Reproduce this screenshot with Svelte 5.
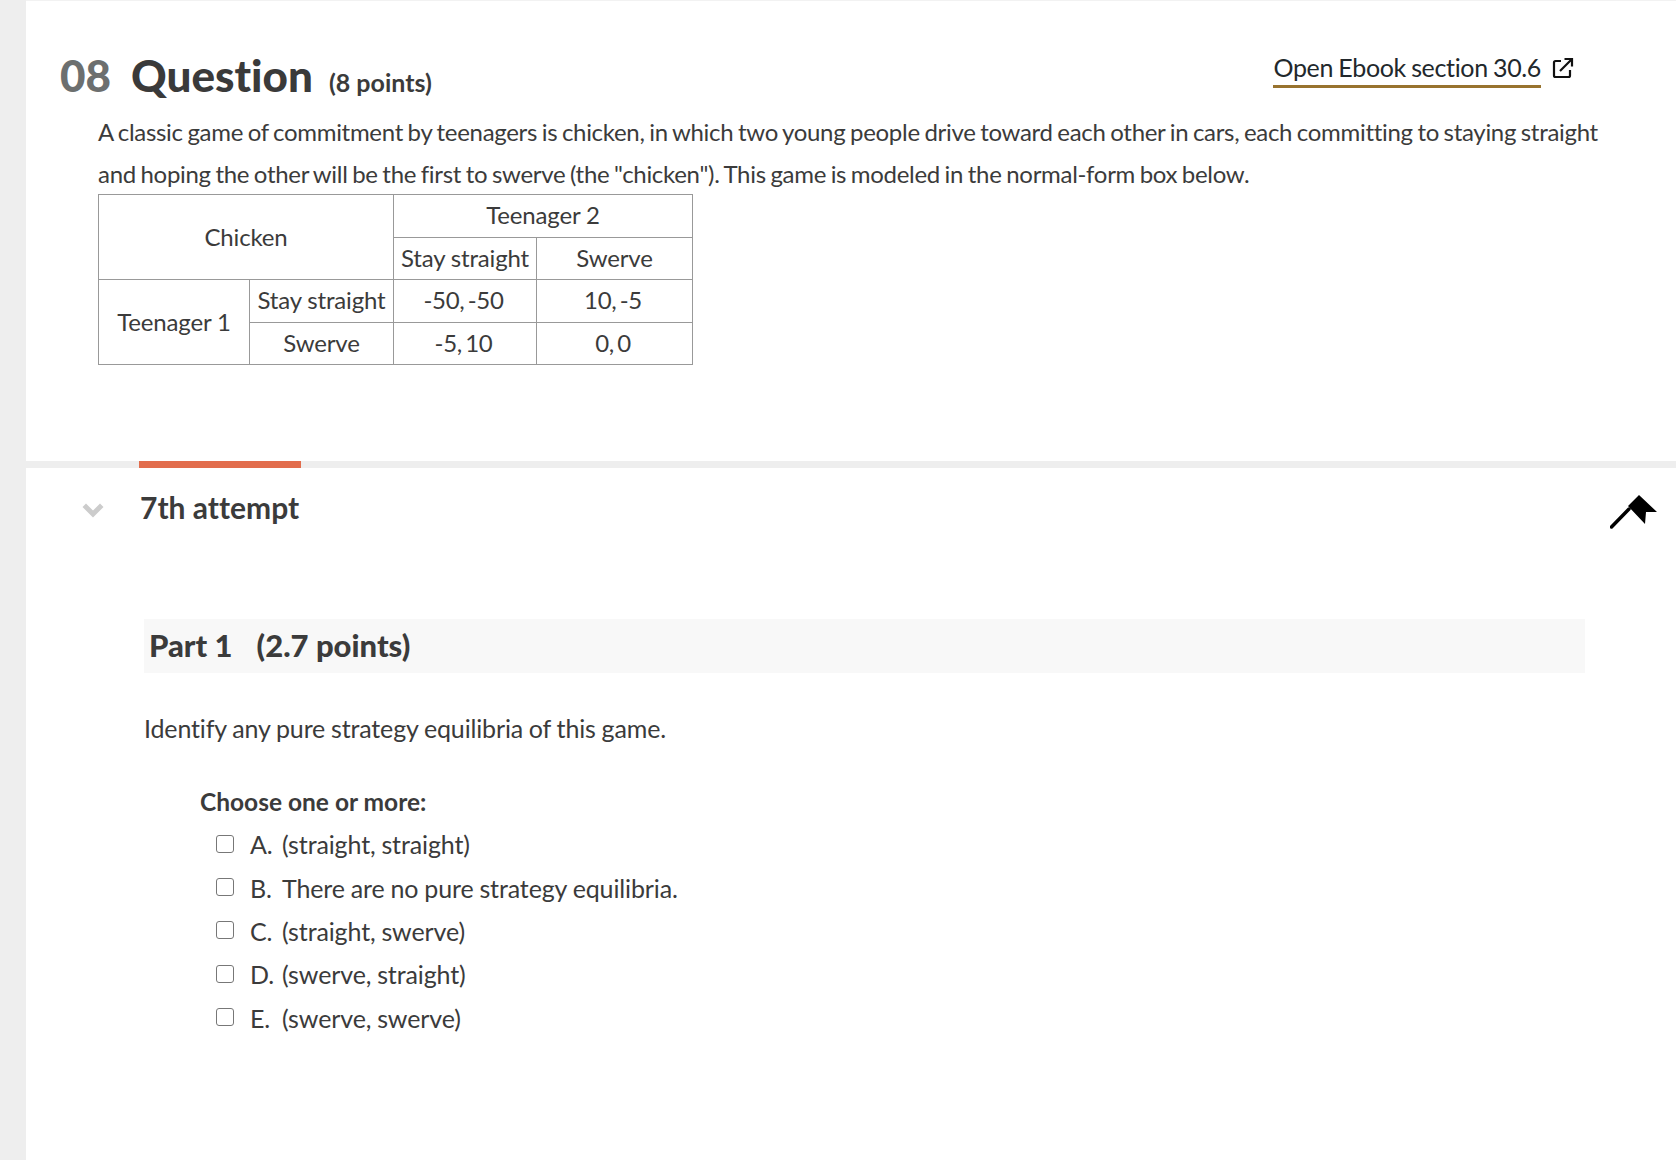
<script>
  const options = [
    ["A.", "(straight, straight)"],
    ["B.", "There are no pure strategy equilibria."],
    ["C.", "(straight, swerve)"],
    ["D.", "(swerve, straight)"],
    ["E.", "(swerve, swerve)"]
  ];
</script>

<main class="page">
  <section class="question">
    <header class="head">
      <h1><span class="num">08</span><span class="title">Question</span><span class="pts">(8 points)</span></h1>
      <a class="ebook" href="#ebook"><span class="link">Open Ebook section 30.6</span>
        <svg width="22" height="22" viewBox="0 0 22 22" fill="none" stroke="#111" stroke-width="2.2">
          <path d="M9 4H3.5A1.5 1.5 0 0 0 2 5.500V18.500A1.500 1.500 0 0 0 3.500 20H16.500A1.500 1.500 0 0 0 18 18.500V13" />
          <path d="M8 14L20 2M12.500 2H20V9.500" />
        </svg>
      </a>
    </header>
    <div class="stem">
      <p>A classic game of commitment by teenagers is chicken, in which two young people drive toward each other in cars, each committing to staying straight and hoping the other will be the first to swerve (the "chicken"). This game is modeled in the normal-form box below.</p>
      <table>
        <colgroup><col class="c1" /><col class="c2" /><col class="c3" /><col class="c4" /></colgroup>
        <tbody>
          <tr><td colspan="2" rowspan="2">Chicken</td><td colspan="2">Teenager 2</td></tr>
          <tr><td>Stay straight</td><td>Swerve</td></tr>
          <tr><td rowspan="2">Teenager 1</td><td>Stay straight</td><td class="pay">-50, -50</td><td class="pay">10, -5</td></tr>
          <tr><td>Swerve</td><td class="pay">-5, 10</td><td class="pay">0, 0</td></tr>
        </tbody>
      </table>
    </div>
  </section>

  <div class="tabs"><span class="tab"></span></div>

  <section class="attempt">
    <div class="attempt-head">
      <svg class="chev" width="22" height="15" viewBox="0 0 22 15"><path d="M0.500 4L4 0.500L11 7.500L18 0.500L21.500 4L11 14.500Z" fill="#ccc" /></svg>
      <h2>7th attempt</h2>
      <svg class="pin" width="48" height="36" viewBox="0 0 48 36">
        <path d="M1.500 33L19 15" stroke="#000" stroke-width="3.500" stroke-linecap="round" />
        <path d="M18 12L29 1L47 18H36L35 30Z" fill="#000" />
      </svg>
    </div>
    <div class="part">
      <h3><span>Part 1</span><span>(2.7 points)</span></h3>
      <p class="ask">Identify any pure strategy equilibria of this game.</p>
      <div class="choices">
        <div class="choose">Choose one or more:</div>
        {#each options as [letter, text]}
          <label class="opt">
            <input type="checkbox" />
            <span class="letter">{letter}</span>
            <span>{text}</span>
          </label>
        {/each}
      </div>
    </div>
  </section>
</main>

<style>
  :global(body) {
    background: #fff;
    font-family: "Lato", sans-serif;
    font-variant-ligatures: none;
    color: #3b3b3b;
  }
  .page {
    box-sizing: border-box;
    min-height: 1160px;
    margin-left: 26px;
    background: #fff;
    border-top: 1px solid #f2f2f2;
    box-shadow: -26px 0 0 #eee;
  }
  .question {
    height: 460px;
    box-sizing: border-box;
    padding: 44px 0 0 34px;
  }
  .head {
    display: flex;
    justify-content: space-between;
    align-items: flex-start;
    padding-right: 102px;
  }
  h1 {
    margin: 0;
    display: flex;
    align-items: baseline;
    font-size: 44px;
    line-height: 60px;
    font-weight: 900;
  }
  .num {
    color: #6c6f6f;
    margin-right: 20px;
  }
  .title {
    color: #3a3a3a;
    margin-right: 16px;
  }
  .pts {
    font-size: 25px;
    font-weight: 700;
  }
  .ebook {
    display: flex;
    align-items: center;
    gap: 11px;
    margin-top: 4px;
    font-size: 25px;
    letter-spacing: -0.35px;
    word-spacing: -0.8px;
    color: #22282c;
    text-decoration: none;
  }
  .link {
    line-height: 36px;
    border-bottom: 3px solid #98732f;
  }
  .ebook svg {
    margin-bottom: 2px;
  }
  .stem {
    margin: -1px 0 0 38px;
    width: 1510px;
  }
  p {
    margin: 0;
    font-size: 24px;
    line-height: 41.500px;
    letter-spacing: -0.3px;
    word-spacing: -1.2px;
  }
  table {
    border-collapse: collapse;
    table-layout: fixed;
    width: 594px;
    font-size: 24px;
    letter-spacing: -0.17px;
  }
  .c1 { width: 151px; }
  .c2 { width: 144px; }
  .c3 { width: 143px; }
  .c4 { width: 156px; }
  td {
    border: 1px solid #999;
    height: 42.500px;
    padding: 0 0 2px;
    box-sizing: border-box;
    text-align: center;
    white-space: nowrap;
  }
  .pay {
    padding-right: 3px;
    letter-spacing: -0.3px;
    word-spacing: -2.5px;
  }
  .tabs {
    height: 7px;
    background: #eee;
    padding-left: 113px;
  }
  .tab {
    display: block;
    width: 162px;
    height: 7px;
    background: #e26d4d;
  }
  .attempt-head {
    display: flex;
    align-items: center;
    padding: 16px 18px 0 56px;
  }
  .chev {
    margin-right: 36px;
    margin-top: 6px;
  }
  h2 {
    margin: 0;
    flex: 1;
    font-size: 30px;
    line-height: 42px;
    font-weight: 700;
  }
  .pin {
    margin-top: 10px;
  }
  .part {
    margin: 89px 0 0 118px;
    width: 1441px;
  }
  h3 {
    margin: 0;
    display: flex;
    gap: 24px;
    height: 54px;
    box-sizing: border-box;
    padding: 0 0 2px 5px;
    align-items: center;
    background: #f8f8f8;
    font-size: 31px;
    font-weight: 900;
  }
  .ask {
    margin-top: 35px;
    font-size: 25px;
    letter-spacing: -0.15px;
    word-spacing: -0.4px;
  }
  .choices {
    margin: 30px 0 0 56px;
  }
  .choose {
    font-size: 24.500px;
    font-weight: 700;
    line-height: 43px;
  }
  .opt {
    display: flex;
    align-items: center;
    height: 43.400px;
    font-size: 25px;
    letter-spacing: -0.12px;
    word-spacing: -0.4px;
    padding-left: 16px;
  }
  input {
    appearance: none;
    box-sizing: border-box;
    width: 18px;
    height: 18px;
    margin: -1px 16px 0 0;
    border: 1.500px solid #777;
    border-radius: 3px;
    background: #fff;
  }
  .letter {
    width: 32px;
  }
</style>
